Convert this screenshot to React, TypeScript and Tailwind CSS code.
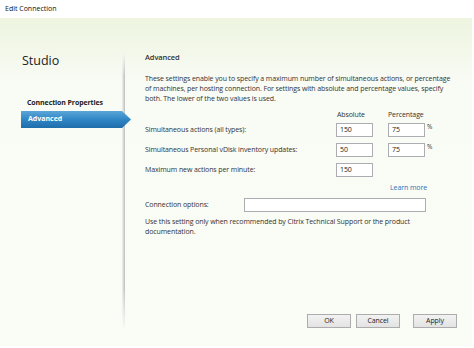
import * as React from 'react'

const font = { fontFamily: '"Open Sans", "Noto Sans", sans-serif' }

function Field({ value, className }: { value?: string; className?: string }) {
  return (
    <div
      className={
        'h-[14px] border border-[#abadb3] bg-white pl-[3px] flex items-center text-[7px] text-[#222] ' +
        (className ?? '')
      }
    >
      {value}
    </div>
  )
}

function Button({ label }: { label: string }) {
  return (
    <div className="w-[44px] h-[14px] border border-[#acacac] bg-gradient-to-b from-[#f2f2f2] to-[#e3e3e3] flex items-center justify-center text-[7px] text-[#222]">
      {label}
    </div>
  )
}

function Row({ label, abs, pct }: { label: string; abs: string; pct?: string }) {
  return (
    <div className="flex items-center h-[14px]">
      <div className="w-[191px]">{label}</div>
      <Field value={abs} className="w-[37px]" />
      {pct && (
        <>
          <Field value={pct} className="w-[37px] ml-[15px]" />
          <span className="ml-[2px] -mt-[6px] text-[6.5px]">%</span>
        </>
      )}
    </div>
  )
}

export default function App() {
  return (
    <div className="w-[474px] h-[348px] bg-white overflow-hidden text-[#333]" style={font}>
      {/* title bar */}
      <div className="h-[18px] pl-[5px] flex items-center text-[7px] text-[#111]">Edit Connection</div>

      {/* dialog body */}
      <div className="h-[328px] mr-[2px] flex bg-gradient-to-b from-[#edf4df] via-[#f9fbf5] via-20% to-[#fafcf6]">
        {/* left nav */}
        <div className="w-[122px] shrink-0 flex flex-col">
          <div className="ml-[22px] mt-[33px] text-[12.5px] leading-[20px] text-[#222]">Studio</div>
          <div className="ml-[27px] mt-[27px] text-[7px] font-bold text-[#222] leading-[10px] tracking-[-0.1px]">
            Connection Properties
          </div>
          <div className="relative z-10 ml-[21px] mt-[3px] w-[110px] h-[17px] bg-gradient-to-b from-[#5aa6d8] via-[#2f86c4] to-[#1f6dab] [clip-path:polygon(0_0,101px_0,110px_50%,101px_100%,0_100%)] flex items-center pl-[7px] text-[7px] font-bold text-white">
            Advanced
          </div>
        </div>

        {/* divider */}
        <div className="w-[3px] shrink-0 mt-[35px] mb-[16px] bg-gradient-to-r from-[#f0f0f0] via-[#d8d8d8] to-[#bdbdbd] [mask-image:linear-gradient(to_bottom,transparent,black_8%,black_85%,transparent)]" />

        {/* content */}
        <div className="flex-1 flex flex-col pl-[20px] text-[7px] leading-[10px] tracking-[-0.1px]">
          <div className="mt-[34px] text-[7.5px] font-semibold text-[#333]">Advanced</div>
          <div className="mt-[12px] whitespace-nowrap">
            These settings enable you to specify a maximum number of simultaneous actions, or percentage
            <br />
            of machines, per hosting connection. For settings with absolute and percentage values, specify
            <br />
            both. The lower of the two values is used.
          </div>

          <div className="mt-[6px] flex h-[10px]">
            <div className="w-[192px]" />
            <div className="w-[37px]">Absolute</div>
            <div className="ml-[14px]">Percentage</div>
          </div>

          <div className="mt-[3px] flex flex-col gap-[6px]">
            <Row label="Simultaneous actions (all types):" abs="150" pct="75" />
            <Row label="Simultaneous Personal vDisk inventory updates:" abs="50" pct="75" />
            <Row label="Maximum new actions per minute:" abs="150" />
          </div>

          <div className="mt-[6px] w-[282px] text-right text-[#2a72b8]">Learn more</div>

          <div className="mt-[5px] flex items-center h-[14px]">
            <div className="w-[99px]">Connection options:</div>
            <Field className="w-[182px]" />
          </div>

          <div className="mt-[5px] whitespace-nowrap">
            Use this setting only when recommended by Citrix Technical Support or the product
            <br />
            documentation.
          </div>

          <div className="mt-auto mb-[18px] flex pl-[162px]">
            <Button label="OK" />
            <div className="ml-[5px]">
              <Button label="Cancel" />
            </div>
            <div className="ml-[13px]">
              <Button label="Apply" />
            </div>
          </div>
        </div>
      </div>
    </div>
  )
}
